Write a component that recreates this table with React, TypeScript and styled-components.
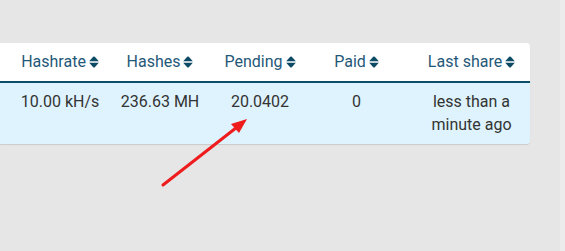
import React from 'react';
import styled, { createGlobalStyle } from 'styled-components';

const GlobalStyle = createGlobalStyle`
  html, body {
    margin: 0;
    padding: 0;
    background: #e6e6e6;
  }
  body {
    font-family: Roboto, "Noto Sans", Arial, sans-serif;
  }
`;

const COLUMNS = '80px 120px 80px 113px 117px';

const columns = ['Hashrate', 'Hashes', 'Pending', 'Paid', 'Last share'];

const workers = [
  {
    hashrate: '10.00 kH/s',
    hashes: '236.63 MH',
    pending: '20.0402',
    paid: '0',
    lastShare: 'less than a minute ago',
  },
];

// up/down sort caret pair
const SortIcon = () => (
  <SortSvg viewBox="0 0 10 12" width="10" height="12">
    <path d="M0.2 5.3 L4.2 0.8 Q5 0 5.8 0.8 L9.8 5.3 Z" />
    <path d="M0.2 6.7 L9.8 6.7 L5.8 11.2 Q5 12 4.2 11.2 Z" />
  </SortSvg>
);

const Arrow = () => (
  <ArrowSvg viewBox="0 0 100 80" width="100" height="80">
    <line x1="2" y1="68" x2="80" y2="7" stroke="#ee1c1c" strokeWidth="3" strokeLinecap="round" />
    <polygon points="86,2 70,7 78,16" fill="#ee1c1c" />
  </ArrowSvg>
);

const App = () => {
  return (
    <>
      <GlobalStyle />
      <Page>
        <Card>
          <HeaderRow>
            {columns.map((name) => (
              <HeaderCell key={name}>
                {name}
                <SortIcon />
              </HeaderCell>
            ))}
          </HeaderRow>
          {workers.map((w, i) => (
            <BodyRow key={i}>
              <Cell>{w.hashrate}</Cell>
              <Cell>{w.hashes}</Cell>
              <Cell>{w.pending}</Cell>
              <Cell>{w.paid}</Cell>
              <Cell>{w.lastShare}</Cell>
            </BodyRow>
          ))}
        </Card>
        <Arrow />
        <EdgeStrip />
      </Page>
    </>
  );
};

const Page = styled.div`
  position: relative;
  width: 565px;
  height: 251px;
  padding-top: 43px;
  box-sizing: border-box;
  overflow: hidden;
`;

const Card = styled.div`
  width: 530px;
  background: #fff;
  border-radius: 0 4px 4px 0;
  box-shadow: 0 1px 1px rgba(0, 0, 0, 0.12);
  overflow: hidden;
`;

const HeaderRow = styled.div`
  display: grid;
  grid-template-columns: ${COLUMNS};
  padding-left: 20px;
  border-bottom: 2px solid #0e4d68;
`;

const BodyRow = styled.div`
  display: grid;
  grid-template-columns: ${COLUMNS};
  padding-left: 20px;
  background: #def3fd;
`;

const HeaderCell = styled.div`
  display: flex;
  align-items: center;
  justify-content: center;
  gap: 3px;
  padding: 8px 0;
  font-size: 16px;
  line-height: 1.4;
  color: #1f5878;
  white-space: nowrap;
`;

const Cell = styled.div`
  padding: 8px 0;
  font-size: 16px;
  line-height: 1.4;
  color: #333;
  text-align: center;
`;

const SortSvg = styled.svg`
  fill: #0d4a66;
  flex-shrink: 0;
  margin-top: -1px;
`;

const ArrowSvg = styled.svg`
  position: absolute;
  left: 161px;
  top: 117px;
  overflow: visible;
`;

const EdgeStrip = styled.div`
  position: absolute;
  top: 0;
  right: 0;
  width: 5px;
  height: 100%;
  background: #ececec;
`;

export default App;
